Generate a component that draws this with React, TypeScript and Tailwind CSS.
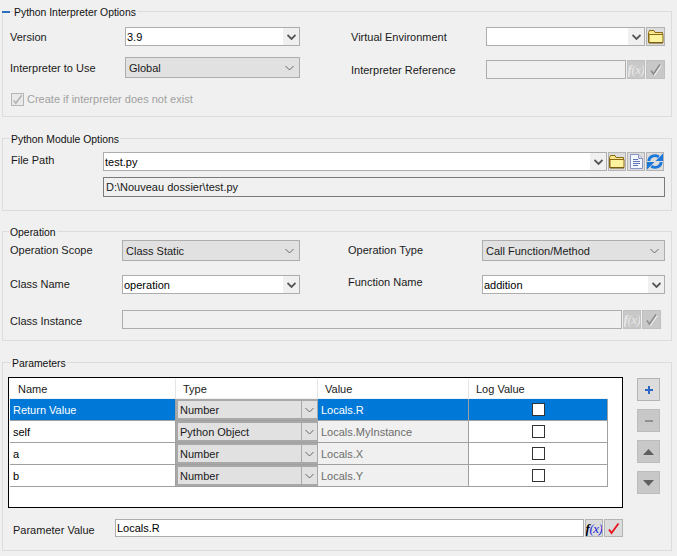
import React from 'react';

const font = "font-['Liberation_Sans',Arial,sans-serif]";

const Chevron = ({ bold }: { bold?: boolean }) => (
  <svg width="9" height="6" viewBox="0 0 9 6" fill="none">
    <path d="M0.5 1 L4.5 5 L8.5 1" stroke={bold ? '#555555' : '#666666'} strokeWidth={bold ? 1.8 : 1} />
  </svg>
);

const FolderIcon = () => (
  <svg width="16" height="14" viewBox="0 0 16 14">
    <path d="M0.5 2.5 L1.5 0.5 H6 L7 2.5 H14.5 V12.5 H0.5 Z" fill="#fbe58b" stroke="#8a6a14" />
    <path d="M1 4.5 H15 V12.5 H1 Z" fill="#fdf29e" stroke="#8a6a14" />
    <path d="M1 12.5 H15 V13.5 H1 Z" fill="#6e5410" />
  </svg>
);

const DocIcon = () => (
  <svg width="13" height="15" viewBox="0 0 13 15">
    <path d="M0.5 0.5 H8.5 L12.5 4.5 V14.5 H0.5 Z" fill="#f4f6fd" stroke="#8a95c9" />
    <path d="M8.5 0.5 V4.5 H12.5" fill="#d5daf0" stroke="#8a95c9" />
    <path d="M3 5.5 H8 M3 7.5 H10 M3 9.5 H10 M3 11.5 H8" stroke="#6173b5" />
  </svg>
);

const RefreshIcon = () => (
  <svg width="17" height="17" viewBox="0 0 17 17" fill="none">
    <path d="M2 8 C2 3.5 7.5 0.5 12.5 3.5" stroke="#1b78d8" strokeWidth="3" />
    <path d="M17 0 V8 H9 Z" fill="#1b78d8" />
    <path d="M15 9 C15 13.5 9.5 16.5 4.5 13.5" stroke="#1b78d8" strokeWidth="3" />
    <path d="M0 17 V9 H8 Z" fill="#1b78d8" />
  </svg>
);

const Check = ({ color }: { color: string }) => (
  <svg width="13" height="13" viewBox="0 0 13 13" fill="none">
    <path d="M2 7.5 L4.5 11 L11.5 1.5" stroke={color} strokeWidth="1.8" />
  </svg>
);

const MutedCheck = () => (
  <svg width="13" height="14" viewBox="0 0 13 14" fill="none">
    <path d="M3 8.5 L5.5 12 L12 2.5" stroke="#eeeeee" strokeWidth="1.4" />
    <path d="M2 7.5 L4.5 11 L11 1.5" stroke="#8c8c8c" strokeWidth="1.6" />
  </svg>
);

const Fx = ({ disabled }: { disabled?: boolean }) => (
  <span className={`font-['Liberation_Serif',serif] italic text-[13px] leading-none tracking-[-0.5px] ${disabled ? 'text-[#e8e8e8]' : 'text-black'}`}>
    <span className="font-bold">f</span><span className={disabled ? 'text-[#e8e8e8]' : 'text-[#1a22d8]'}>(x)</span>
  </span>
);

const IconBtn = ({ w, h, disabled, children }: { w: string; h: string; disabled?: boolean; children: React.ReactNode }) => (
  <div className={`${w} ${h} flex items-center justify-center border shrink-0 overflow-hidden ${disabled ? 'bg-[#c8c8c8] border-[#c0c0c0]' : 'bg-[#dcdcdc] border-[#b4b4b4]'}`}>
    {children}
  </div>
);

const Combo = ({ w, value, pl = 'pl-px' }: { w: string; value: string; pl?: string }) => (
  <div className={`${w} h-[19px] flex border border-[#adadad] bg-white shrink-0`}>
    <span className={`flex-1 ${pl} leading-[19px] text-black`}>{value}</span>
    <span className="w-[16px] bg-[#f0f0f0] flex items-center justify-center"><Chevron bold /></span>
  </div>
);

const Select = ({ w, value }: { w: string; value: string }) => (
  <div className={`${w} h-[21px] flex items-center justify-between pl-[3px] pr-[5px] border border-[#adadad] bg-[#e1e1e1] shrink-0`}>
    <span className="pt-[2px]">{value}</span>
    <Chevron />
  </div>
);

const Empty = ({ w }: { w: string }) => <div className={`${w} h-[19px] border border-[#adadad] bg-[#f0f0f0] shrink-0`} />;

const Group = ({ title, h, mt, titleLeft = 'left-[7px]', children }: { title: string; h: string; mt: string; titleLeft?: string; children: React.ReactNode }) => (
  <div className={`relative ${h} ${mt} border border-[#dcdcdc]`}>
    <span className={`absolute ${titleLeft} -top-[7px] bg-[#f0f0f0] px-[1px] text-[10.4px] leading-[16px] text-[#111111]`}>{title}</span>
    {children}
  </div>
);

const params = [
  { name: 'Return Value', type: 'Number', value: 'Locals.R', selected: true },
  { name: 'self', type: 'Python Object', value: 'Locals.MyInstance' },
  { name: 'a', type: 'Number', value: 'Locals.X' },
  { name: 'b', type: 'Number', value: 'Locals.Y' },
];

const SideBtn = ({ disabled, children }: { disabled?: boolean; children: React.ReactNode }) => (
  <div className={`w-[23px] h-[23px] flex items-center justify-center border ${disabled ? 'bg-[#c8c8c8] border-[#bcbcbc]' : 'bg-[#dcdcdc] border-[#b4b4b4]'}`}>
    {children}
  </div>
);

export default function App() {
  return (
    <div className={`${font} relative w-[677px] h-[556px] overflow-hidden bg-[#f0f0f0] px-[2px] pt-[11px] text-[11px] text-[#1a1a1a]`}>
      <div className="w-[670px]">
        <div className="absolute left-[2px] top-[11px] z-10 w-[8px] h-[2px] bg-[#2a6fc0]" />
        <Group title="Python Interpreter Options" h="h-[106px]" mt="mt-0" titleLeft="left-[10px]">
          <div className="flex pl-[7px] pt-[15px]">
            <div className="w-[341px]">
              <div className="flex items-center">
                <span className="w-[115px] pt-[2px]">Version</span>
                <Combo w="w-[175px]" value="3.9" />
              </div>
              <div className="flex items-center mt-[11px]">
                <span className="w-[115px] pt-[2px]">Interpreter to Use</span>
                <Select w="w-[175px]" value="Global" />
              </div>
              <div className="flex items-center gap-[3px] mt-[13px] pl-px text-[#a0a0a0]">
                <span className="w-[13px] h-[13px] border border-[#b5b5b5] bg-[#e9e9e9] flex items-center justify-center">
                  <Check color="#b0b0b0" />
                </span>
                <span>Create if interpreter does not exist</span>
              </div>
            </div>
            <div>
              <div className="flex items-center">
                <span className="w-[135px] pt-[2px]">Virtual Environment</span>
                <Combo w="w-[159px]" value="" />
                <div className="ml-[1px]">
                  <IconBtn w="w-[19px]" h="h-[19px]"><FolderIcon /></IconBtn>
                </div>
              </div>
              <div className="flex items-center mt-[14px]">
                <span className="w-[135px] pt-[2px]">Interpreter Reference</span>
                <Empty w="w-[140px]" />
                <div className="ml-[1px] flex gap-px">
                  <IconBtn w="w-[18px]" h="h-[19px]" disabled><Fx disabled /></IconBtn>
                  <IconBtn w="w-[19px]" h="h-[19px]" disabled><MutedCheck /></IconBtn>
                </div>
              </div>
            </div>
          </div>
        </Group>

        <Group title="Python Module Options" h="h-[73px]" mt="mt-[21px]" titleLeft="left-[7px]">
          <div className="flex pl-[8px] pt-[13px]">
            <span className="w-[92px]">File Path</span>
            <div>
              <div className="flex">
                <Combo w="w-[504px]" value="test.py" pl="pl-[1px]" />
                <div className="flex gap-px ml-[1px]">
                  <IconBtn w="w-[18px]" h="h-[19px]"><FolderIcon /></IconBtn>
                  <IconBtn w="w-[18px]" h="h-[19px]"><DocIcon /></IconBtn>
                  <IconBtn w="w-[18px]" h="h-[19px]"><RefreshIcon /></IconBtn>
                </div>
              </div>
              <div className="w-[562px] h-[20px] mt-[6px] border border-[#7a7a7a] pl-[2px] leading-[18px] bg-[#f0f0f0]">D:\Nouveau dossier\test.py</div>
            </div>
          </div>
        </Group>

        <Group title="Operation" h="h-[110px]" mt="mt-[20px]" titleLeft="left-[6px]">
          <div className="pl-[7px] pt-[8px]">
            <div className="flex items-center">
              <span className="w-[112px] -mt-[1px]">Operation Scope</span>
              <Select w="w-[178px]" value="Class Static" />
              <span className="w-[134px] ml-[48px]">Operation Type</span>
              <Select w="w-[183px]" value="Call Function/Method" />
            </div>
            <div className="flex items-center mt-[14px]">
              <span className="w-[112px] -mt-[1px]">Class Name</span>
              <Combo w="w-[178px]" value="operation" />
              <span className="w-[134px] ml-[48px] -mt-[5px]">Function Name</span>
              <Combo w="w-[183px]" value="addition" />
            </div>
            <div className="flex items-center mt-[16px]">
              <span className="w-[112px] mt-[3px]">Class Instance</span>
              <Empty w="w-[500px]" />
              <div className="flex gap-px ml-[1px]">
                <IconBtn w="w-[18px]" h="h-[19px]" disabled><Fx disabled /></IconBtn>
                <IconBtn w="w-[19px]" h="h-[19px]" disabled><MutedCheck /></IconBtn>
              </div>
            </div>
          </div>
        </Group>

        <Group title="Parameters" h="h-[189px]" mt="mt-[21px]" titleLeft="left-[8px]">
          <div className="flex pl-[5px] pt-[14px]">
            <div className="w-[615px] h-[131px] border border-black bg-white pl-[1px] pt-[1px]">
              <div className="w-[598px] flex h-[20px] items-center border-b border-[#f0f0f0]">
                <span className="w-[166px] pl-[8px] border-r border-[#e5e5e5] leading-[20px]">Name</span>
                <span className="w-[142px] pl-[7px] border-r border-[#e5e5e5] leading-[20px]">Type</span>
                <span className="w-[151px] pl-[7px] border-r border-[#e5e5e5] leading-[20px]">Value</span>
                <span className="w-[139px] pl-[7px] leading-[20px]">Log Value</span>
              </div>
              {params.map(p => (
                <div key={p.name} className="w-[598px] flex h-[22px] border-b border-[#a0a0a0] border-r">
                  <div className={`w-[166px] pl-[3px] leading-[22px] border-r border-[#a0a0a0] ${p.selected ? 'bg-[#0078d7] text-white' : 'bg-white text-black'}`}>{p.name}</div>
                  <div className="w-[142px] flex items-center justify-between bg-[#e1e1e1] border-y-2 border-l-2 border-r border-[#a8a8a8] pl-[2px]">
                    <span className="pt-[2px]">{p.type}</span>
                    <span className="w-[16px] h-full flex items-center justify-center border-l border-[#a8a8a8]"><Chevron /></span>
                  </div>
                  <div className={`w-[151px] pl-[3px] leading-[22px] border-r border-[#a0a0a0] ${p.selected ? 'bg-[#0078d7] text-white' : 'bg-[#f0f0f0] text-[#6d6d6d]'}`}>{p.value}</div>
                  <div className={`flex-1 flex items-center justify-center ${p.selected ? 'bg-[#0078d7]' : 'bg-white'}`}>
                    <span className="w-[13px] h-[13px] bg-white border border-[#333333]" />
                  </div>
                </div>
              ))}
            </div>
            <div className="flex flex-col gap-[8px] ml-[14px] mt-[1px]">
              <SideBtn><svg width="8" height="8" viewBox="0 0 8 8"><path d="M3 0 H5 V3 H8 V5 H5 V8 H3 V5 H0 V3 H3 Z" fill="#2f68c4" /></svg></SideBtn>
              <SideBtn disabled><span className="w-[8px] h-[2px] bg-[#909090]" /></SideBtn>
              <SideBtn disabled><svg width="11" height="6" viewBox="0 0 11 6"><path d="M5.5 0 L11 6 H0 Z" fill="#5f5f5f" /></svg></SideBtn>
              <SideBtn disabled><svg width="11" height="6" viewBox="0 0 11 6"><path d="M0 0 H11 L5.5 6 Z" fill="#5f5f5f" /></svg></SideBtn>
            </div>
          </div>
          <div className="flex items-start pl-[10px] mt-[11px]">
            <span className="w-[102px] mt-[3px]">Parameter Value</span>
            <div className="w-[469px] h-[18px] bg-white border border-[#adadad] pl-[1px] leading-[17px] text-black">Locals.R</div>
            <div className="flex gap-px ml-[1px]">
              <IconBtn w="w-[18px]" h="h-[18px]"><Fx /></IconBtn>
              <IconBtn w="w-[19px]" h="h-[18px]"><Check color="#e8101c" /></IconBtn>
            </div>
          </div>
        </Group>
      </div>
    </div>
  );
}
